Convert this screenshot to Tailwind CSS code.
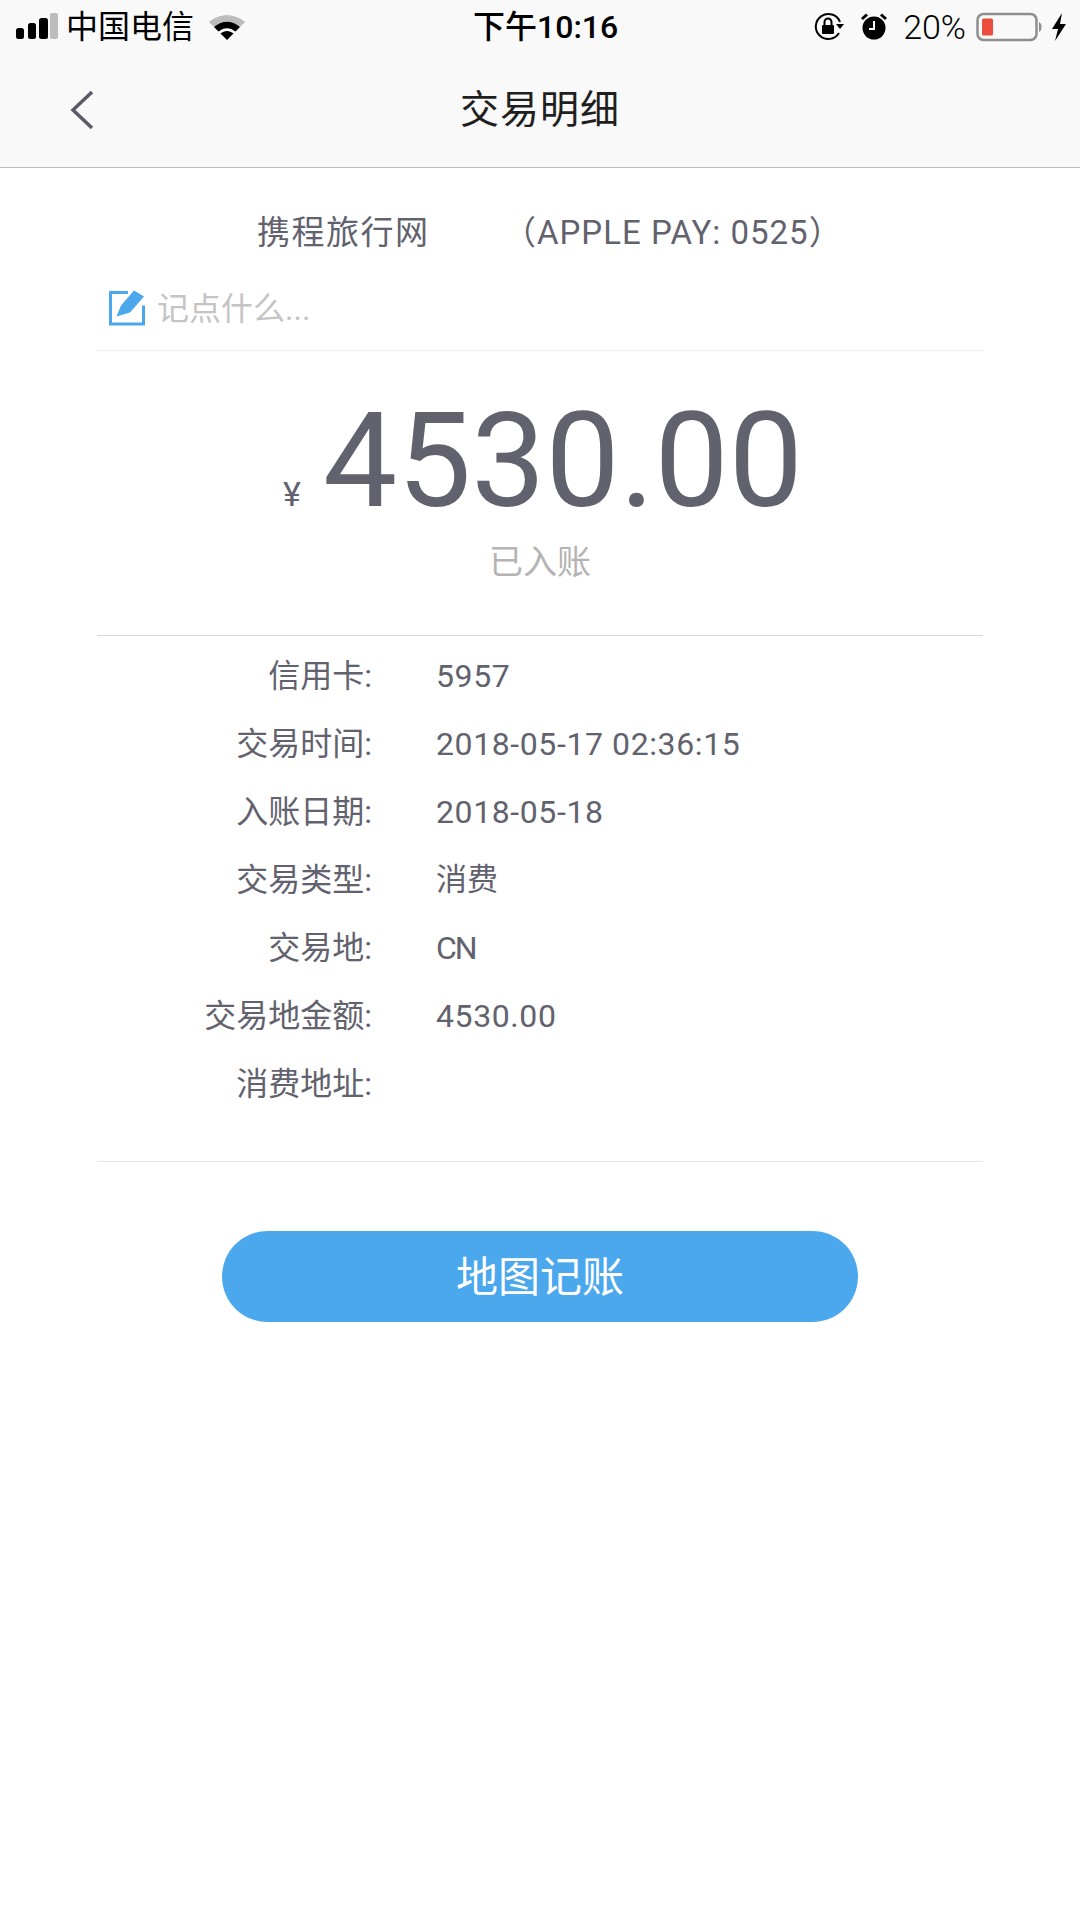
<!DOCTYPE html>
<html lang="zh">
<head>
    <meta charset="UTF-8">
    <title>交易明细</title>
    <script src="https://cdn.jsdelivr.net/npm/@tailwindcss/browser@4"></script>
</head>
<body class="bg-white font-['Roboto','Noto_Sans_CJK_SC',sans-serif]">
<div class="w-[1080px] h-[1920px] flex flex-col bg-white">
    <!-- status bar + nav -->
    <div class="h-[168px] bg-[#f9f9f9] border-b-[1.5px] border-[#bdbdbd] flex flex-col">
        <div class="h-[54px] flex items-center justify-between relative text-black">
            <div class="flex items-center pl-[15px]">
                <svg width="44" height="28" viewBox="0 0 44 28" fill="#000">
                    <rect x="1" y="15" width="8" height="11" rx="2.5"/>
                    <rect x="13" y="10" width="8" height="16" rx="2.5"/>
                    <rect x="24" y="5" width="9" height="21" rx="2.5"/>
                    <rect x="35" y="0" width="8" height="26" rx="2" fill="#bcbcbc"/>
                </svg>
                <span class="ml-[7px] text-[32px] leading-none">中国电信</span>
                <svg class="ml-[14px]" width="38" height="28" viewBox="0 0 38 28">
                    <path d="M1 9 C11 0 27 0 37 9 L32 14 C24 7 14 7 6 14 Z" fill="#bcbcbc"/>
                    <path d="M6 14 C14 7 24 7 32 14 L27.500 18.500 C22 14 16 14 10.500 18.500 Z" fill="#000"/>
                    <path d="M12.500 20.500 C16.500 17 21.500 17 25.500 20.500 L19 27 Z" fill="#000"/>
                </svg>
            </div>
            <span class="absolute left-[473px] top-[8px] text-[32px] leading-[38px] font-medium">下午10:16</span>
            <div class="flex items-center pr-[13px]">
                <svg width="30" height="30" viewBox="0 0 30 30">
                    <path d="M25 21 A12.500 12.500 0 1 1 26 10" fill="none" stroke="#000" stroke-width="2"/>
                    <path d="M22 12 H30 L26 17 Z" fill="#000"/>
                    <rect x="8" y="13" width="12" height="9" rx="1" fill="#000"/>
                    <path d="M10.500 13 V10 A3.500 3.500 0 0 1 17.500 10 V13" fill="none" stroke="#000" stroke-width="2"/>
                </svg>
                <svg class="ml-[16px]" width="28" height="28" viewBox="0 0 28 28">
                    <circle cx="14" cy="15" r="11.500" fill="#000"/>
                    <path d="M14 8 V16 H9" fill="none" stroke="#fff" stroke-width="2"/>
                    <path d="M2 6 L7 1.500 M26 6 L21 1.500" stroke="#000" stroke-width="3"/>
                </svg>
                <span class="ml-[15px] text-[34px] leading-none font-light">20%</span>
                <svg class="ml-[10px]" width="66" height="30" viewBox="0 0 66 30">
                    <rect x="1.500" y="2" width="59" height="26" rx="6" fill="none" stroke="#8e8e8e" stroke-width="2.500"/>
                    <rect x="6" y="6.500" width="11" height="17" rx="1.500" fill="#ec4c3c"/>
                    <path d="M63 10 C65 11 65.500 13 65.500 15 C65.500 17 65 19 63 20 Z" fill="#8e8e8e"/>
                </svg>
                <svg class="ml-[9px]" width="16" height="28" viewBox="0 0 16 28" fill="#000">
                    <path d="M11 0 L1 16 H7 L4 28 L15 11 H9 Z"/>
                </svg>
            </div>
        </div>
        <div class="flex-1 relative flex items-center justify-center">
            <svg class="absolute left-[69px] top-[35px]" width="26" height="42" viewBox="0 0 26 42">
                <path d="M23 3 L4 21 L23 39" fill="none" stroke="#5b5b67" stroke-width="3.500"/>
            </svg>
            <span class="text-[39px] text-[#1f1f1f] tracking-[1px]">交易明细</span>
        </div>
    </div>

    <div class="px-[97px] flex flex-col">
        <!-- merchant -->
        <div class="h-[117px] flex items-center pl-[160px] text-[33px] text-[#62626e] pt-[13px]">
            <span class="w-[246px] tracking-[1.500px]">携程旅行网</span>
            <span class="tracking-[1px]">（APPLE PAY: 0525）</span>
        </div>
        <div class="h-[66px] border-b border-[#efefef] flex items-start pl-[12px] pt-[3px]">
            <svg width="36" height="37" viewBox="0 0 36 36" class="mt-[1px]">
                <path d="M19 3 H1.500 V34.500 H34.500 V16" fill="none" stroke="#4ca8ed" stroke-width="3"/>
                <path d="M7.500 27 L12 16 L25 1 L35 7 L21 23 Z" fill="#4ca8ed"/>
            </svg>
            <span class="ml-[12px] text-[32px] leading-[42px] text-[#c4c4c4]">记点什么...</span>
        </div>

        <!-- amount -->
        <div class="h-[285px] border-b border-[#d9d9d9] flex flex-col items-center">
            <div class="flex items-baseline h-[189px] pt-[33px] pl-[6px]">
                <span class="text-[34px] text-[#62626e] mr-[22px]">¥</span>
                <span class="text-[132px] leading-[154px] text-[#62626e]">4530.00</span>
            </div>
            <span class="text-[34px] text-[#b4b4b4] leading-[44px]">已入账</span>
        </div>

        <!-- detail rows -->
        <div class="h-[526px] border-b border-[#e6e6e6] pt-[6px] text-[32px] text-[#62626e]">
            <div class="h-[68px] flex items-center"><span class="w-[275px] text-right">信用卡:</span><span class="ml-[64px] tracking-[0.600px]">5957</span></div>
            <div class="h-[68px] flex items-center"><span class="w-[275px] text-right">交易时间:</span><span class="ml-[64px] tracking-[0.600px]">2018-05-17 02:36:15</span></div>
            <div class="h-[68px] flex items-center"><span class="w-[275px] text-right">入账日期:</span><span class="ml-[64px] tracking-[0.600px]">2018-05-18</span></div>
            <div class="h-[68px] flex items-center"><span class="w-[275px] text-right">交易类型:</span><span class="ml-[64px] text-[31px]">消费</span></div>
            <div class="h-[68px] flex items-center"><span class="w-[275px] text-right">交易地:</span><span class="ml-[64px] tracking-[-2px]">CN</span></div>
            <div class="h-[68px] flex items-center"><span class="w-[275px] text-right">交易地金额:</span><span class="ml-[64px] tracking-[0.600px]">4530.00</span></div>
            <div class="h-[68px] flex items-center"><span class="w-[275px] text-right">消费地址:</span></div>
        </div>

        <!-- button -->
        <div class="flex justify-center pt-[69px]">
            <div class="w-[636px] h-[91px] pt-[2px] rounded-full bg-[#4ca8ed] text-white text-[42px] flex items-center justify-center">地图记账</div>
        </div>
    </div>
</div>
</body>
</html>
